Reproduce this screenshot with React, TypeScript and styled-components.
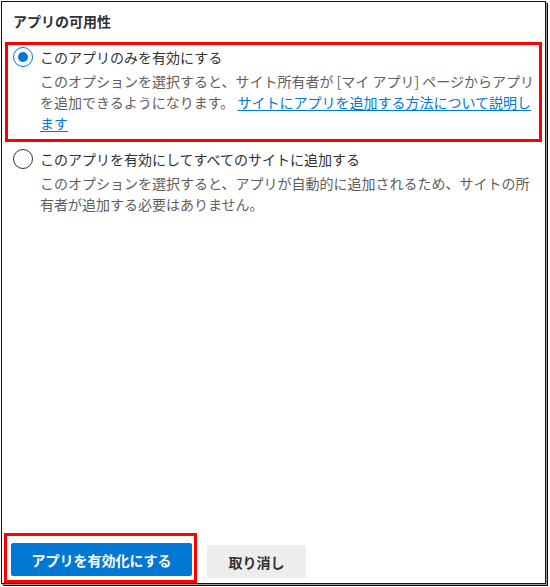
import React from "react";
import styled, { createGlobalStyle } from "styled-components";

const GlobalStyle = createGlobalStyle`
  html, body {
    margin: 0;
    padding: 0;
    background: #ffffff;
  }
  body {
    font-family: "Noto Sans CJK JP", "Noto Sans", sans-serif;
    -webkit-font-smoothing: antialiased;
  }
  * { box-sizing: border-box; }
`;

const Page = styled.div`
  width: 550px;
  height: 587px;
  padding: 1px;
`;

const Frame = styled.div`
  width: 545px;
  height: 583px;
  border: 1px solid #111111;
  box-shadow: 1px 1px 0 #9a9a9a, 2px 2px 0 #111111;
  display: flex;
  flex-direction: column;
  background: #ffffff;
`;

const Title = styled.div`
  padding: 9px 0 0 11px;
  margin-bottom: 11px;
  font-size: 14px;
  line-height: 20px;
  font-weight: 600;
  color: #323130;
`;

const OptionList = styled.div`
  display: flex;
  flex-direction: column;
  gap: 2px;
  padding: 0 3px;
`;

const OptionBlock = styled.div<{ $highlighted?: boolean }>`
  border: 3px solid ${(p) => (p.$highlighted ? "#ff0000" : "transparent")};
  padding: 2px 0 5px 5px;
`;

const OptionRow = styled.label`
  display: flex;
  align-items: center;
  gap: 7px;
  font-size: 14px;
  line-height: 20px;
  color: #323130;
  cursor: pointer;
`;

const Radio = styled.span<{ $checked?: boolean }>`
  flex: none;
  width: 20px;
  height: 20px;
  border-radius: 50%;
  border: 1px solid ${(p) => (p.$checked ? "#0078d4" : "#323130")};
  display: flex;
  align-items: center;
  justify-content: center;
  &::after {
    content: "";
    width: 10px;
    height: 10px;
    border-radius: 50%;
    background: ${(p) => (p.$checked ? "#0078d4" : "transparent")};
  }
`;

const Description = styled.p`
  margin: 4px 0 0 27px;
  font-size: 14px;
  line-height: 21px;
  color: #605e5c;
`;

const Link = styled.a`
  color: #0078d4;
  text-decoration: underline;
  text-underline-offset: 2px;
`;

const Footer = styled.div`
  margin-top: auto;
  display: flex;
  align-items: center;
  padding-left: 2px;
`;

const ActionFrame = styled.div`
  border: 3px solid #ff0000;
  padding: 7px 2px 4px 4px;
  display: flex;
`;

const Button = styled.button<{ $primary?: boolean; $width: number }>`
  width: ${(p) => p.$width}px;
  height: 33px;
  border: none;
  border-radius: 2px;
  font-family: inherit;
  font-size: 14px;
  font-weight: 600;
  color: ${(p) => (p.$primary ? "#ffffff" : "#323130")};
  background: ${(p) => (p.$primary ? "#0078d4" : "#ededed")};
  cursor: pointer;
`;

const SecondaryButton = styled(Button)`
  margin-left: 10px;
  margin-top: 7px;
`;

export default function App() {
  return (
    <>
      <GlobalStyle />
      <Page>
        <Frame>
          <Title>アプリの可用性</Title>
          <OptionList>
            <OptionBlock $highlighted>
              <OptionRow>
                <Radio $checked />
                このアプリのみを有効にする
              </OptionRow>
              <Description>
                このオプションを選択すると、サイト所有者が [マイ アプリ] ページからアプリを追加できるようになります。{" "}
                <Link href="#">サイトにアプリを追加する方法について説明します</Link>
              </Description>
            </OptionBlock>
            <OptionBlock>
              <OptionRow>
                <Radio />
                このアプリを有効にしてすべてのサイトに追加する
              </OptionRow>
              <Description>
                このオプションを選択すると、アプリが自動的に追加されるため、サイトの所有者が追加する必要はありません。
              </Description>
            </OptionBlock>
          </OptionList>
          <Footer>
            <ActionFrame>
              <Button $primary $width={181}>アプリを有効化にする</Button>
            </ActionFrame>
            <SecondaryButton $width={99}>取り消し</SecondaryButton>
          </Footer>
        </Frame>
      </Page>
    </>
  );
}
